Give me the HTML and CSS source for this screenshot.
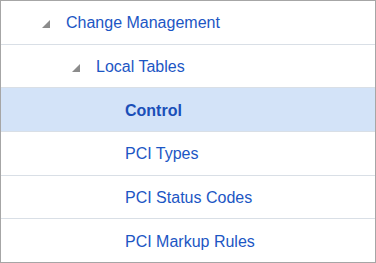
FILE: index.html
```html
<!DOCTYPE html>
<html lang="en">
<head>
    <meta charset="UTF-8">
    <title>Tree</title>
    <link rel="stylesheet" href="styles.css">
</head>
<body>
    <ul class="tree">
        <li class="node level-1">
            <span class="toggle"></span>
            <a href="#">Change Management</a>
        </li>
        <li class="node level-2">
            <span class="toggle"></span>
            <a href="#">Local Tables</a>
        </li>
        <li class="node level-3 selected">
            <a href="#">Control</a>
        </li>
        <li class="node level-3">
            <a href="#">PCI Types</a>
        </li>
        <li class="node level-3">
            <a href="#">PCI Status Codes</a>
        </li>
        <li class="node level-3">
            <a href="#">PCI Markup Rules</a>
        </li>
    </ul>
</body>
</html>
```

FILE: styles.css
```css
html, body {
    margin: 0;
    padding: 0;
    background-color: white;
}

body {
    font-family: 'Liberation Sans', Arial, sans-serif;
}

.tree {
    list-style: none;
    margin: 0;
    padding: 0;
    width: 376px;
    height: 263px;
    box-sizing: border-box;
    border: 1px solid #a6a6a6;
    display: flex;
    flex-direction: column;
    overflow: hidden;
}

.tree .node {
    flex: 1;
    display: flex;
    align-items: center;
    padding-top: 2px;
    border-bottom: 1px solid #d9dfe6;
    font-size: 16px;
}

.tree .node:last-child {
    border-bottom: none;
}

.tree .node a {
    color: #1c56c4;
    text-decoration: none;
}

.tree .level-1 {
    padding-left: 41px;
}

.tree .level-2 {
    padding-left: 71px;
}

.tree .level-3 {
    padding-left: 124px;
}

.tree .toggle {
    width: 0;
    height: 0;
    border-style: solid;
    border-width: 0 0 8px 8px;
    border-color: transparent transparent #8c8c8c transparent;
    margin-right: 16px;
    margin-top: 1px;
}

.tree .selected {
    background-color: #d3e3f8;
}

.tree .selected a {
    font-weight: bold;
    color: #1a4fb8;
}
```
